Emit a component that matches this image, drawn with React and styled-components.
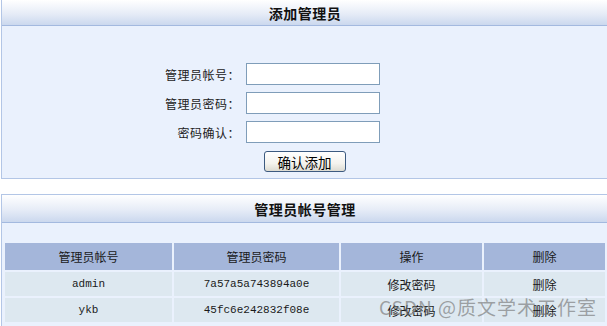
import React from 'react';
import styled, { createGlobalStyle } from 'styled-components';

const GlobalStyle = createGlobalStyle`
  html, body {
    margin: 0;
    padding: 0;
    background: #ffffff;
    overflow: hidden;
  }
  body {
    font-family: "Noto Sans CJK SC", "Liberation Sans", sans-serif;
    font-size: 12px;
    color: #000;
  }
`;

const Page = styled.div`
  position: relative;
  width: 607px;
  height: 326px;
  overflow: hidden;
`;

const Panel = styled.section`
  box-sizing: border-box;
  width: 607px;
  margin-left: 1px;
  margin-top: ${(p) => p.$top || 0}px;
  border: 1px solid #b3c6e6;
  border-top-width: ${(p) => (p.$noTop ? 0 : 1)}px;
  border-right: none;
  background: #eaf1fd;
`;

const PanelHeader = styled.div`
  height: ${(p) => p.$h || 25}px;
  display: flex;
  align-items: center;
  justify-content: center;
  background: linear-gradient(to bottom, #ffffff 0%, #e6ecf7 55%, #cbd8ee 100%);
  border-bottom: 1px solid #a3b9df;
  font-size: 14px;
  font-weight: bold;
  color: #111;
  letter-spacing: 0.5px;
`;

const FormBody = styled.div`
  padding: 37px 0 6px;
  display: flex;
  flex-direction: column;
  gap: 7px;
`;

const FormRow = styled.div`
  display: grid;
  grid-template-columns: 238px 134px;
  column-gap: 6px;
  align-items: center;
`;

const Label = styled.label`
  text-align: right;
  font-size: 12px;
  letter-spacing: 0.5px;
  color: #222;
`;

const Input = styled.input`
  box-sizing: border-box;
  width: 134px;
  height: 22px;
  border: 1px solid #7f9db9;
  background: #fff;
  margin: 0;
  padding: 0 3px;
`;

const ButtonRow = styled.div`
  display: flex;
  justify-content: center;
  padding-right: 1px;
  margin-top: 1px;
`;

const Button = styled.button`
  box-sizing: border-box;
  width: 82px;
  height: 21px;
  padding: 0;
  border: 1px solid #3c5a80;
  border-radius: 3px;
  background: linear-gradient(to bottom, #ffffff 0%, #f4f3ee 60%, #dcdbd2 100%);
  font-family: "Noto Sans CJK SC", sans-serif;
  font-size: 13.5px;
  line-height: 18px;
  color: #000;
`;

const TableBody = styled.div`
  padding: 18px 1px 0;
  height: 120px;
`;

const Table = styled.table`
  width: 100%;
  border-collapse: separate;
  border-spacing: 2px;
  table-layout: fixed;
`;

const Th = styled.th`
  height: 27px;
  padding: 0;
  background: #a4b6da;
  font-weight: normal;
  font-size: 12px;
  color: #1a1a1a;
  text-align: center;
`;

const Td = styled.td`
  height: 24px;
  padding: 0;
  background: #dde8f0;
  text-align: center;
  font-size: ${(p) => (p.$mono ? 11 : 12)}px;
  font-family: ${(p) =>
    p.$mono ? '"Liberation Mono", monospace' : '"Noto Sans CJK SC", sans-serif'};
  color: #1a1a1a;
`;

const Watermark = styled.div`
  position: absolute;
  right: 10px;
  bottom: 10px;
  font-family: "Noto Sans CJK SC", "Liberation Sans", sans-serif;
  font-size: 19px;
  line-height: 1;
  letter-spacing: 1px;
  color: rgba(110, 110, 110, 0.6);
  pointer-events: none;
  white-space: nowrap;
`;

const admins = [
  { name: 'admin', pwd: '7a57a5a743894a0e' },
  { name: 'ykb', pwd: '45fc6e242832f08e' },
];

export default function App() {
  return (
    <Page>
      <GlobalStyle />
      <Panel $noTop>
        <PanelHeader>添加管理员</PanelHeader>
        <FormBody>
          <FormRow>
            <Label>管理员帐号：</Label>
            <Input type="text" />
          </FormRow>
          <FormRow>
            <Label>管理员密码：</Label>
            <Input type="password" />
          </FormRow>
          <FormRow>
            <Label>密码确认：</Label>
            <Input type="password" />
          </FormRow>
          <ButtonRow>
            <Button>确认添加</Button>
          </ButtonRow>
        </FormBody>
      </Panel>

      <Panel $top={15}>
        <PanelHeader $h={27}>管理员帐号管理</PanelHeader>
        <TableBody>
          <Table>
            <colgroup>
              <col style={{ width: 167 }} />
              <col style={{ width: 165 }} />
              <col style={{ width: 141 }} />
              <col />
            </colgroup>
            <thead>
              <tr>
                <Th>管理员帐号</Th>
                <Th>管理员密码</Th>
                <Th>操作</Th>
                <Th>删除</Th>
              </tr>
            </thead>
            <tbody>
              {admins.map((a) => (
                <tr key={a.name}>
                  <Td $mono>{a.name}</Td>
                  <Td $mono>{a.pwd}</Td>
                  <Td>修改密码</Td>
                  <Td>删除</Td>
                </tr>
              ))}
            </tbody>
          </Table>
        </TableBody>
      </Panel>
      <Watermark>CSDN @质文学术工作室</Watermark>
    </Page>
  );
}
